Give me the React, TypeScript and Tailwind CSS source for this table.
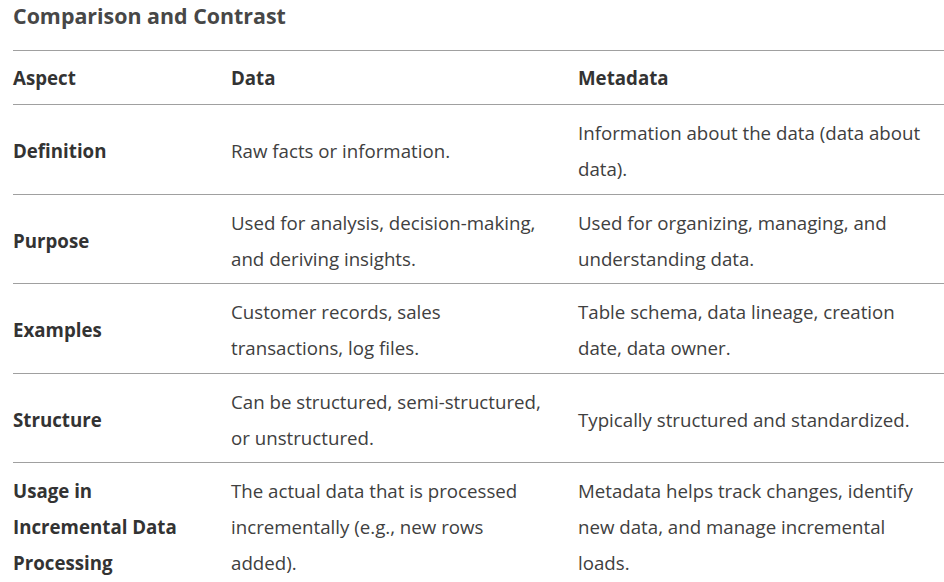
import React from "react";

const rows = [
  {
    aspect: "Definition",
    data: "Raw facts or information.",
    meta: "Information about the data (data about data).",
  },
  {
    aspect: "Purpose",
    data: "Used for analysis, decision-making, and deriving insights.",
    meta: "Used for organizing, managing, and understanding data.",
  },
  {
    aspect: "Examples",
    data: "Customer records, sales transactions, log files.",
    meta: "Table schema, data lineage, creation date, data owner.",
  },
  {
    aspect: "Structure",
    data: "Can be structured, semi-structured, or unstructured.",
    meta: "Typically structured and standardized.",
  },
  {
    aspect: "Usage in Incremental Data Processing",
    data: "The actual data that is processed incrementally (e.g., new rows added).",
    meta: "Metadata helps track changes, identify new data, and manage incremental loads.",
  },
];

const App = () => {
  return (
    <div
      className="w-[944px] h-[582px] overflow-hidden bg-white pl-[13px] text-[#404040]"
      style={{ fontFamily: '"Segoe UI", "Open Sans", "Noto Sans", sans-serif' }}
    >
      <h3 className="text-[21.4px] font-bold leading-[32px] mb-[18px] text-[#474747]">
        Comparison and Contrast
      </h3>
      <table className="w-[931px] border-collapse table-fixed text-[18.7px] leading-[36px]">
        <colgroup>
          <col className="w-[218px]" />
          <col className="w-[347px]" />
          <col />
        </colgroup>
        <thead>
          <tr className="border-y border-[#a0a0a0]">
            <th className="text-left font-bold pt-[9px] pb-[8px] pr-[28px] text-[#333]">Aspect</th>
            <th className="text-left font-bold pt-[9px] pb-[8px] pr-[28px] text-[#333]">Data</th>
            <th className="text-left font-bold pt-[9px] pb-[8px] pr-[10px] text-[#333]">Metadata</th>
          </tr>
        </thead>
        <tbody>
          {rows.map((r) => (
            <tr key={r.aspect} className="border-b border-[#a0a0a0]">
              <td className="align-middle pt-[10px] pb-[6.5px] pr-[28px] font-bold text-[#333]">{r.aspect}</td>
              <td className="align-middle pt-[10px] pb-[6.5px] pr-[28px]">{r.data}</td>
              <td className="align-middle pt-[10px] pb-[6.5px] pr-[10px]">{r.meta}</td>
            </tr>
          ))}
        </tbody>
      </table>
    </div>
  );
};

export default App;
